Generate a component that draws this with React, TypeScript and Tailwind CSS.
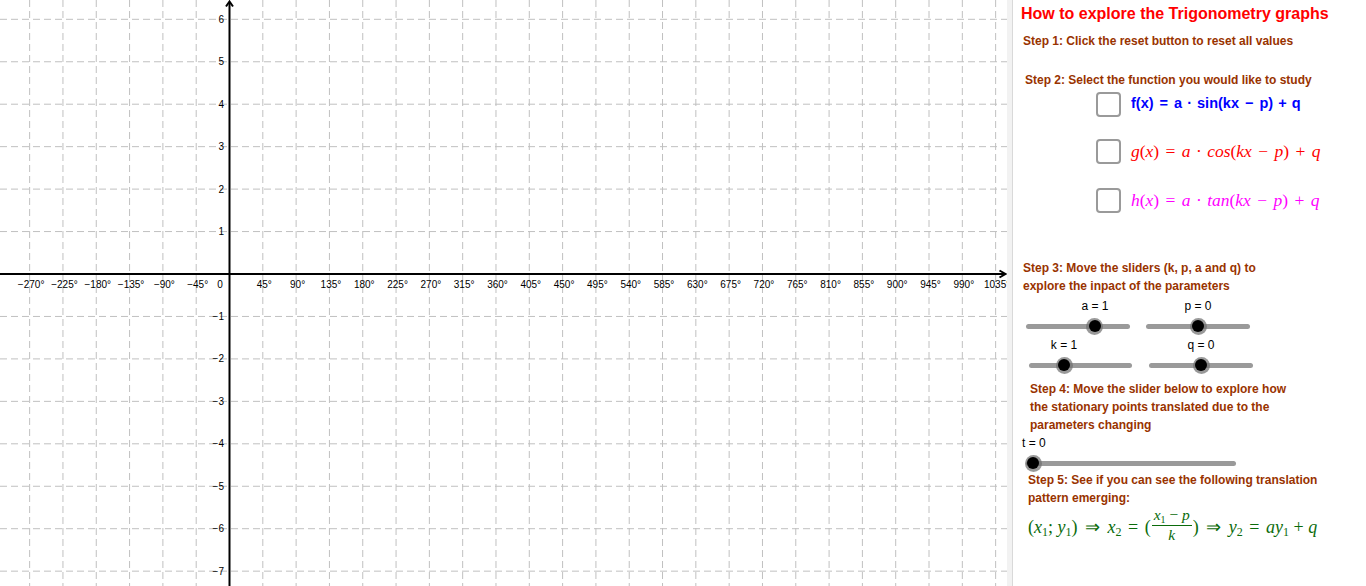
import React from "react";

const X0 = 229.5;
const Y0 = 274;
const DX = 33.31;
const DY = 42.45;
const W = 1007;
const H = 586;

const BROWN = "text-[#993300]";

function Graph() {
  const xs: number[] = [];
  for (let i = -6; i <= 23; i++) if (i !== 0) xs.push(i);
  const ys: number[] = [];
  for (let j = -7; j <= 6; j++) if (j !== 0) ys.push(j);

  return (
    <svg width={W} height={H} viewBox={`0 0 ${W} ${H}`} className="block">
      {/* grid */}
      {xs.map((i) => (
        <line
          key={"v" + i}
          x1={X0 + i * DX}
          x2={X0 + i * DX}
          y1={0}
          y2={H}
          stroke="#c0c0c0"
          strokeWidth={1}
          strokeDasharray="7 4"
        />
      ))}
      {ys.map((j) => (
        <line
          key={"h" + j}
          x1={0}
          x2={W}
          y1={Y0 - j * DY}
          y2={Y0 - j * DY}
          stroke="#c0c0c0"
          strokeWidth={1}
          strokeDasharray="7 4"
        />
      ))}

      {/* axes */}
      <line x1={0} x2={1005} y1={Y0} y2={Y0} stroke="#000" strokeWidth={2} />
      <path d="M999.5,270.5 L1005.5,274 L999.5,277.5" fill="none" stroke="#000" strokeWidth={2} />
      <line x1={X0} x2={X0} y1={2} y2={H} stroke="#000" strokeWidth={2} />
      <path d="M226,6.5 L229.5,1.5 L233,6.5" fill="none" stroke="#000" strokeWidth={2} />

      {/* labels */}
      <g fontFamily="'Liberation Sans', Arial, sans-serif" fontSize="10" fill="#000">
        {xs.map((i) => (
          <text key={"xl" + i} x={X0 + i * DX + 1.5} y={287.5} textAnchor="middle">
            {(i < 0 ? "\u2212" : "") + Math.abs(i * 45) + "°"}
          </text>
        ))}
        <text x={220} y={287.5} textAnchor="middle">
          0
        </text>
        {ys.map((j) => (
          <text key={"yl" + j} x={224} y={Y0 - j * DY + 3.5} textAnchor="end">
            {(j < 0 ? "\u2212" : "") + Math.abs(j)}
          </text>
        ))}
      </g>
    </svg>
  );
}

function Checkbox() {
  return <div className="w-[25px] h-[25px] shrink-0 rounded-[4px] border-2 border-[#9a9a9a] bg-white" />;
}

function Slider({ label, width, frac }: { label: string; width: number; frac: number }) {
  const pos = width * frac;
  return (
    <div className="flex flex-col" style={{ width }}>
      <div className="h-[16px] flex items-center">
        <span
          className="text-[12px] leading-[16px] text-black whitespace-nowrap"
          style={{ marginLeft: pos, transform: "translateX(-50%)" }}
        >
          {label}
        </span>
      </div>
      <Track width={width} frac={frac} />
    </div>
  );
}

function Track({ width, frac }: { width: number; frac: number }) {
  return (
    <div className="relative h-[24px] flex items-center" style={{ width }}>
      <div className="h-[5px] w-full rounded-full bg-[#9a9a9a]" />
      <div
        className="absolute top-1/2 w-[17px] h-[17px] rounded-full bg-[#6e6e6e]/70 flex items-center justify-center"
        style={{ left: width * frac - 8.5, marginTop: -8.5 }}
      >
        <div className="w-[12px] h-[12px] rounded-full bg-black" />
      </div>
    </div>
  );
}

function I({ children }: { children: React.ReactNode }) {
  return <span className="italic">{children}</span>;
}

function Sub({ children, size = "text-[12px]" }: { children: React.ReactNode; size?: string }) {
  return <sub className={`${size} leading-none`}>{children}</sub>;
}

function Formula() {
  return (
    <div
      className="flex items-center text-[#0b6b0b] text-[18px] leading-[22px] whitespace-nowrap"
      style={{ fontFamily: "'Liberation Serif', 'Times New Roman', serif" }}
    >
      <span>
        (<I>x</I>
        <Sub>1</Sub>; <I>y</I>
        <Sub>1</Sub>) <span className="mx-[3px]">⇒</span> <I>x</I>
        <Sub>2</Sub> <span className="mx-[2px]">=</span> (
      </span>
      <span className="inline-flex flex-col items-center mx-[1px] -mt-[4px]">
        <span className="text-[15.5px] leading-[16px] px-[2px]">
          <I>x</I>
          <Sub size="text-[10px]">1</Sub> − <I>p</I>
        </span>
        <span className="block h-[1px] w-full bg-[#0b6b0b] mt-[2px]" />
        <span className="text-[15.5px] leading-[17px]">
          <I>k</I>
        </span>
      </span>
      <span>
        ) <span className="mx-[3px]">⇒</span> <I>y</I>
        <Sub>2</Sub> <span className="mx-[2px]">=</span> <I>ay</I>
        <Sub>1</Sub> + <I>q</I>
      </span>
    </div>
  );
}

function SerifFn({ name, fn, color }: { name: string; fn: string; color: string }) {
  return (
    <span
      className={`text-[17.5px] whitespace-nowrap ${color}`}
      style={{ fontFamily: "'Liberation Serif', 'Times New Roman', serif" }}
    >
      <I>{name}</I>(<I>x</I>) <span className="mx-[2px]">=</span> <I>a</I> <span className="mx-[1px]">·</span>{" "}
      <I>{fn}</I>(<I>kx</I> <span className="mx-[2px]">−</span> <I>p</I>) <span className="mx-[2px]">+</span> <I>q</I>
    </span>
  );
}

function Panel() {
  return (
    <div
      className="flex-1 flex flex-col bg-white overflow-hidden"
      style={{ fontFamily: "'Liberation Sans', Arial, sans-serif" }}
    >
      <div className="mt-[4px] pl-[8px] h-[20px] leading-[20px] text-[16px] font-bold text-[#ff0000] whitespace-nowrap">
        How to explore the Trigonometry graphs
      </div>
      <div className={`mt-[8px] pl-[10px] text-[12px] leading-[18px] font-bold ${BROWN}`}>
        Step 1: Click the reset button to reset all values
      </div>
      <div className={`mt-[21px] pl-[12px] text-[12px] leading-[18px] font-bold ${BROWN}`}>
        Step 2: Select the function you would like to study
      </div>

      <div className="mt-[2px] pl-[83px] flex items-center gap-[10px] h-[26px]">
        <Checkbox />
        <span className="text-[14.5px] font-bold text-[#0000ff] whitespace-nowrap">
          f(x) <span className="mx-[2px]">=</span> a <span className="mx-[1px]">·</span> sin(kx{" "}
          <span className="mx-[2px]">−</span> p) <span className="mx-[1px]">+</span> q
        </span>
      </div>
      <div className="mt-[21px] pl-[83px] flex items-center gap-[10px] h-[26px]">
        <Checkbox />
        <SerifFn name="g" fn="cos" color="text-[#ff0000]" />
      </div>
      <div className="mt-[23px] pl-[83px] flex items-center gap-[10px] h-[26px]">
        <Checkbox />
        <SerifFn name="h" fn="tan" color="text-[#ff00ff]" />
      </div>

      <div className={`mt-[46px] pl-[10px] text-[12px] leading-[18px] font-bold ${BROWN}`}>
        Step 3: Move the sliders (k, p, a and q) to
        <br />
        explore the inpact of the parameters
      </div>

      <div className="mt-[3px] pl-[13px] flex gap-[16px]">
        <Slider label="a = 1" width={104} frac={0.663} />
        <Slider label="p = 0" width={104} frac={0.5} />
      </div>
      <div className="-mt-[1px] pl-[16px] flex gap-[17px]">
        <Slider label="k = 1" width={103} frac={0.34} />
        <Slider label="q = 0" width={104} frac={0.5} />
      </div>

      <div className={`mt-[3px] pl-[17px] text-[12px] leading-[18px] font-bold ${BROWN}`}>
        Step 4: Move the slider below to explore how
        <br />
        the stationary points translated due to the
        <br />
        parameters changing
      </div>
      <div className="mt-[2px] pl-[9px] text-[12px] leading-[14px] text-black">t = 0</div>
      <div className="mt-[1px] pl-[13px]">
        <Track width={210} frac={0.035} />
      </div>
      <div className={`-mt-[4px] pl-[15px] text-[12px] leading-[18px] font-bold ${BROWN}`}>
        Step 5: See if you can see the following translation
        <br />
        pattern emerging:
      </div>
      <div className="mt-[2px] pl-[15px] h-[36px] flex items-center">
        <Formula />
      </div>
    </div>
  );
}

export default function App() {
  return (
    <div className="w-[1366px] h-[586px] flex overflow-hidden bg-white">
      <div className="w-[1007px] h-[586px] shrink-0">
        <Graph />
      </div>
      <div className="w-[6px] shrink-0 bg-[#f2f2f2] border-r border-[#d9d9d9]" />
      <Panel />
    </div>
  );
}
